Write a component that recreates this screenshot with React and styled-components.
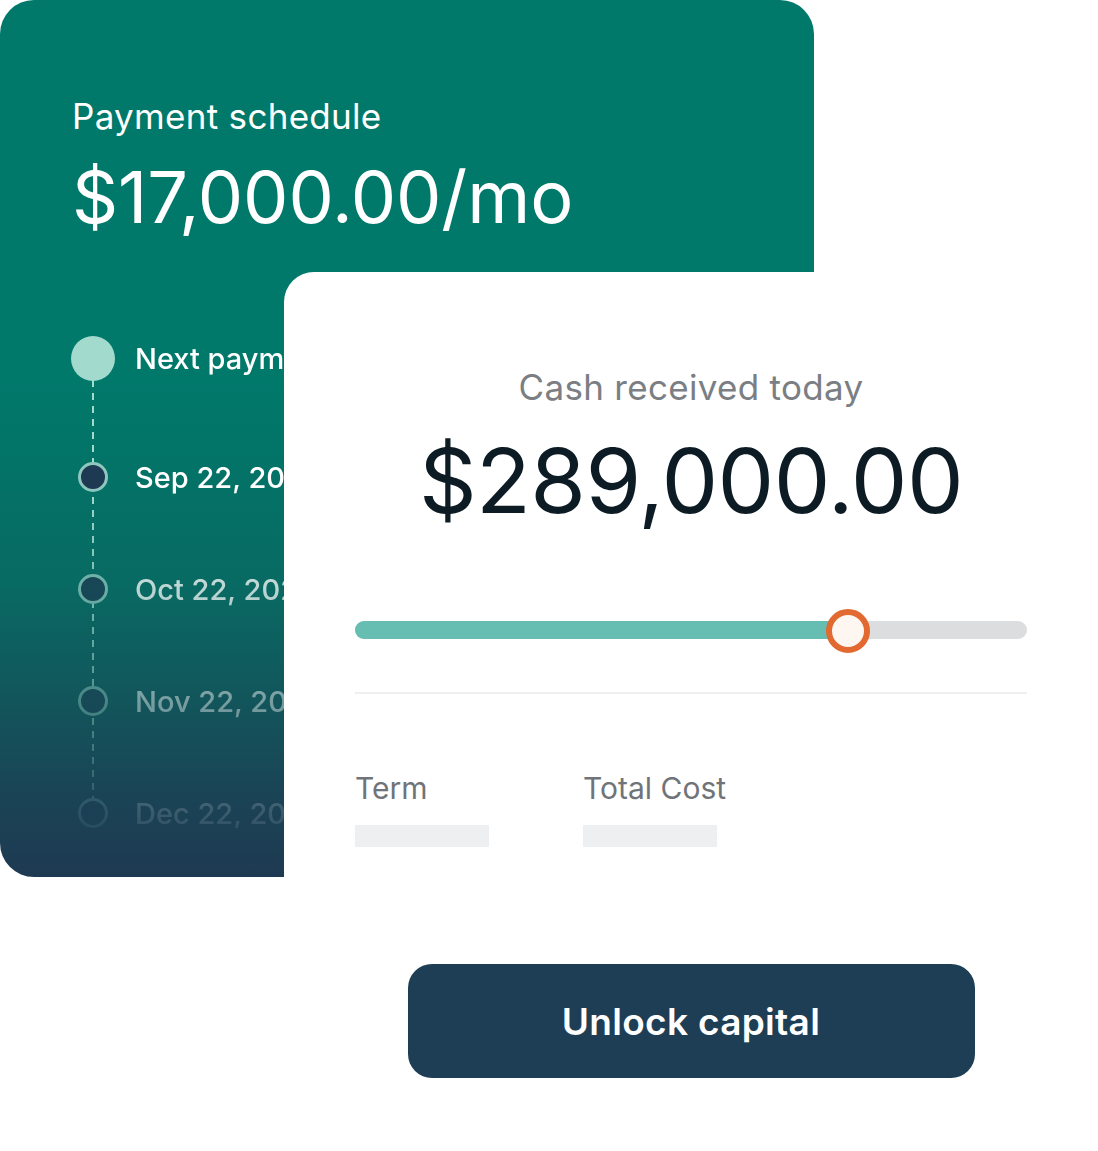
import React from "react";
import styled, { createGlobalStyle } from "styled-components";

const GlobalStyle = createGlobalStyle`
  html, body {
    margin: 0;
    padding: 0;
    background: #ffffff;
  }
  body {
    font-family: Inter, "Noto Sans", sans-serif;
    -webkit-font-smoothing: antialiased;
  }
`;

const Stage = styled.div`
  display: grid;
  grid-template-columns: 284px 530px 284px;
  grid-template-rows: 272px 605px auto;
  width: 1098px;
  min-height: 1151px;
  overflow: hidden;
`;

const ScheduleCard = styled.section`
  grid-column: 1 / 3;
  grid-row: 1 / 3;
  border-radius: 34px;
  padding: 96px 0 0 72px;
  overflow: hidden;
  background: linear-gradient(
    180deg,
    #00786a 0%,
    #00786a 44%,
    #086b63 66%,
    #12555b 80%,
    #1b4255 92%,
    #1e3a52 100%
  );
  color: #ffffff;
`;

const Caption = styled.div`
  font-size: 35px;
  line-height: 40px;
  font-weight: 400;
  letter-spacing: 0.3px;
`;

const Monthly = styled.div`
  margin-top: 17px;
  font-size: 72px;
  line-height: 87px;
  font-weight: 400;
  letter-spacing: -0.1px;
`;

const Timeline = styled.ol`
  position: relative;
  list-style: none;
  margin: 96px 0 0 -1px;
  padding: 0;
  display: flex;
  flex-direction: column;
  gap: 82px;
  -webkit-mask-image: linear-gradient(
    to bottom,
    #000 0%,
    #000 30%,
    rgba(0, 0, 0, 0.1) 100%
  );
  mask-image: linear-gradient(
    to bottom,
    #000 0%,
    #000 30%,
    rgba(0, 0, 0, 0.1) 100%
  );

  &::before {
    content: "";
    position: absolute;
    left: 21px;
    top: 44px;
    bottom: 15px;
    width: 2px;
    background: repeating-linear-gradient(
      to bottom,
      #a3dace 0 7px,
      transparent 7px 13px
    );
  }
`;

const Step = styled.li`
  display: flex;
  align-items: center;
  gap: 20px;
  height: ${(p) => (p.$current ? "44px" : "30px")};
  font-size: 29px;
  font-weight: 500;
  white-space: nowrap;
`;

const DotSlot = styled.span`
  position: relative;
  z-index: 1;
  width: 44px;
  display: flex;
  justify-content: center;
`;

const Dot = styled.span`
  box-sizing: border-box;
  display: block;
  border-radius: 50%;
  width: ${(p) => (p.$current ? "45px" : "30px")};
  height: ${(p) => (p.$current ? "45px" : "30px")};
  background: ${(p) => (p.$current ? "#a3dace" : "#1e3a52")};
  border: ${(p) => (p.$current ? "none" : "3.5px solid #8fc7be")};
`;

const AdvanceCard = styled.section`
  grid-column: 2 / 4;
  grid-row: 2 / 4;
  background: #ffffff;
  border-top-left-radius: 30px;
  padding: 95px 71px 73px;
  display: flex;
  flex-direction: column;
`;

const Label = styled.div`
  text-align: center;
  font-size: 35px;
  line-height: 41px;
  color: #7b7e82;
  letter-spacing: 0.3px;
`;

const Amount = styled.div`
  margin-top: 18px;
  text-align: center;
  font-size: 90px;
  line-height: 109px;
  color: #0c1b24;
  letter-spacing: -0.6px;
`;

const Slider = styled.div`
  position: relative;
  margin-top: 73px;
  height: 44px;
  display: flex;
  align-items: center;
`;

const Track = styled.div`
  width: 100%;
  height: 18px;
  border-radius: 9px;
  background: #dcdddf;
  overflow: hidden;
`;

const Fill = styled.div`
  height: 100%;
  background: #66beb2;
`;

const Thumb = styled.span`
  position: absolute;
  top: 1px;
  box-sizing: border-box;
  width: 44px;
  height: 44px;
  margin-left: -22px;
  border-radius: 50%;
  border: 6px solid #e2692f;
  background: #fef6f1;
`;

const Divider = styled.hr`
  margin: 40px 0 0;
  border: none;
  height: 2px;
  background: #eeeff0;
`;

const Terms = styled.div`
  margin-top: 76px;
  display: flex;
  gap: 94px;
`;

const TermItem = styled.div`
  display: flex;
  flex-direction: column;
  gap: 19px;
`;

const TermLabel = styled.div`
  font-size: 30px;
  line-height: 36px;
  color: #707478;
`;

const Skeleton = styled.div`
  width: 134px;
  height: 22px;
  background: #eeeff0;
`;

const UnlockButton = styled.button`
  align-self: center;
  margin-top: 117px;
  width: 567px;
  height: 114px;
  border: none;
  border-radius: 24px;
  background: #1e3e55;
  color: #ffffff;
  font-family: Inter, "Noto Sans", sans-serif;
  font-size: 37px;
  font-weight: 600;
  letter-spacing: 0.3px;
  cursor: pointer;
`;

const steps = [
  { label: "Next payment", current: true },
  { label: "Sep 22, 2024" },
  { label: "Oct 22, 2024" },
  { label: "Nov 22, 2024" },
  { label: "Dec 22, 2024" },
];

const progress = 73.4;

export default function App() {
  return (
    <>
      <GlobalStyle />
      <Stage>
        <ScheduleCard>
          <Caption>Payment schedule</Caption>
          <Monthly>$17,000.00/mo</Monthly>
          <Timeline>
            {steps.map((s) => (
              <Step key={s.label} $current={s.current}>
                <DotSlot>
                  <Dot $current={s.current} />
                </DotSlot>
                {s.label}
              </Step>
            ))}
          </Timeline>
        </ScheduleCard>

        <AdvanceCard>
          <Label>Cash received today</Label>
          <Amount>$289,000.00</Amount>
          <Slider>
            <Track>
              <Fill style={{ width: `${progress}%` }} />
            </Track>
            <Thumb style={{ left: `${progress}%` }} />
          </Slider>
          <Divider />
          <Terms>
            <TermItem>
              <TermLabel>Term</TermLabel>
              <Skeleton />
            </TermItem>
            <TermItem>
              <TermLabel>Total Cost</TermLabel>
              <Skeleton />
            </TermItem>
          </Terms>
          <UnlockButton>Unlock capital</UnlockButton>
        </AdvanceCard>
      </Stage>
    </>
  );
}
